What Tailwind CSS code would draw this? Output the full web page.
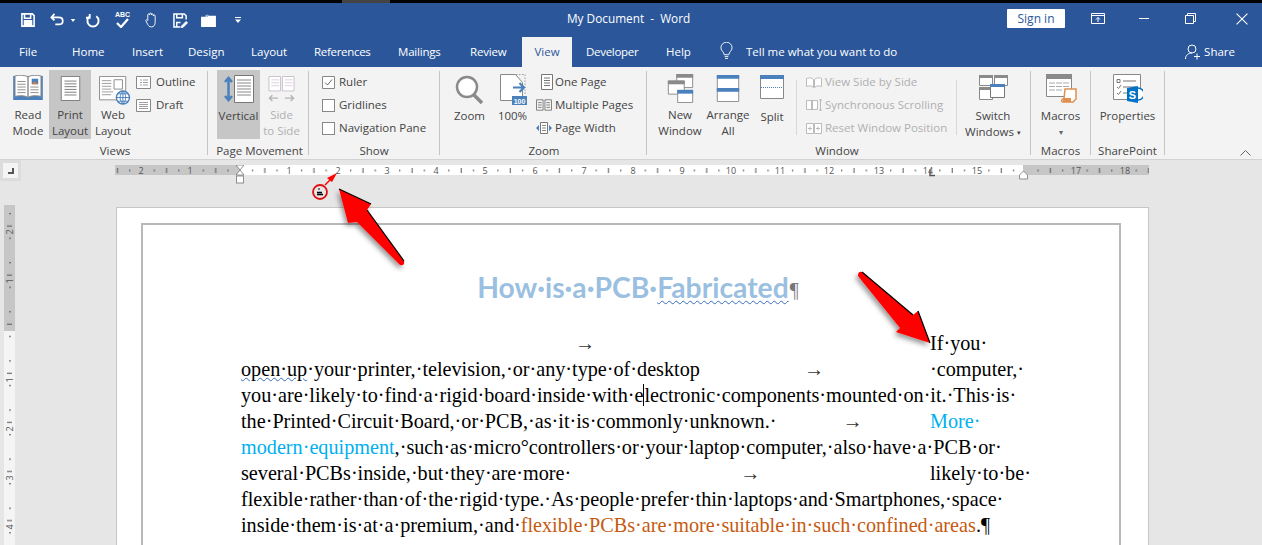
<!doctype html>
<html><head><meta charset="utf-8">
<script src="https://cdn.jsdelivr.net/npm/@tailwindcss/browser@4"></script>
</head>
<body class="w-[1262px] h-[545px] overflow-hidden relative bg-[#e6e6e6] font-['Open_Sans',sans-serif] text-[11.5px] text-[#444]">

<!-- top strip -->
<div class="h-[3px] bg-black flex"><div class="ml-[342px] w-[48px] bg-[#444]"></div></div>

<!-- title bar -->
<div class="h-[34px] bg-[#2b579a] text-white flex items-center relative">
  <div class="flex items-center ml-[21px] h-full">
    <svg class="w-[14px] h-[14px]" viewBox="0 0 16 16" fill="none" stroke="#fff" stroke-width="1.800"><path d="M1 1h12l2 2v12H1z"/><path d="M4 1v5h7V1" /><path d="M4 15v-6h8v6" fill="#fff"/></svg>
    <svg class="w-[15px] h-[14px] ml-[15px]" viewBox="0 0 17 16" fill="none" stroke="#fff" stroke-width="2"><path d="M5 1L1.500 5 5 8.500M2 5h8c6 0 6 8 0 8H6"/></svg>
    <svg class="w-[6px] h-[3px] ml-[5px]" viewBox="0 0 6 4" fill="#fff"><path d="M0 0h6L3 4z"/></svg>
    <svg class="w-[14px] h-[15px] ml-[10px]" viewBox="0 0 15 16" fill="none" stroke="#fff" stroke-width="2"><path d="M11 3.500a6 6 0 1 1-7 0M4 1v4H0"/></svg>
    <div class="relative ml-[15px] w-[15px] h-[16px]">
      <span class="absolute left-0 top-[-2px] text-[7px] font-bold leading-[9px] font-['Liberation_Sans',sans-serif]">ABC</span>
      <svg class="absolute left-[1px] top-[6px] w-[13px] h-[10px]" viewBox="0 0 13 10" fill="none" stroke="#fff" stroke-width="2.200"><path d="M1 5l4 4 7-8"/></svg>
    </div>
    <svg class="w-[12px] h-[16px] ml-[15px]" viewBox="0 0 13 17" fill="none" stroke="#fff" stroke-width="1"><path d="M3 9V3a1 1 0 0 1 2 0V2a1 1 0 0 1 2 0v1a1 1 0 0 1 2 0v1a1 1 0 0 1 2 0v7c0 3-1.500 5-4 5s-3-1-4-2.500L1 9.500c-.5-1 1-2 2-.5z"/></svg>
    <svg class="w-[15px] h-[15px] ml-[16px]" viewBox="0 0 16 16" fill="none" stroke="#fff" stroke-width="1.600"><path d="M8 15H1V1h11l2 2v4"/><path d="M4 1v4h6V1M4 15v-5h4"/><path d="M9 14l5-5 1.500 1.500-5 5H9z" fill="#fff" stroke-width="1"/></svg>
    <svg class="w-[15px] h-[13px] ml-[13px]" viewBox="0 0 16 14" fill="#fff"><path d="M0 3h5V1h1v2h1V0l1 2h8v12H0z"/></svg>
    <svg class="w-[6px] h-[6px] ml-[19px]" viewBox="0 0 6 6" fill="#fff"><path d="M0 0h6v1H0zM0 2.500h6L3 6z"/></svg>
  </div>
  <span class="absolute left-[567px] top-[7px] text-[11.8px] leading-[17px]">My Document&nbsp; -&nbsp; Word</span>
  <div class="ml-auto flex items-center h-full">
    <div class="w-[58px] h-[19px] bg-white rounded-[1px] text-[#2b579a] text-[12px] leading-[19px] text-center mr-[26px] mt-[-4px]">Sign in</div>
    <svg class="w-[14px] h-[11px] mr-[34px] mt-[-4px]" viewBox="0 0 14 11" fill="none" stroke="#fff"><path d="M.5.500h13v10H.5zM.5 2.500h13M7 9V4.500M5 6.500l2-2 2 2"/></svg>
    <div class="w-[10px] h-[1px] bg-white mr-[36px] mt-[-3px]"></div>
    <svg class="w-[11px] h-[11px] mr-[40px] mt-[-3px]" viewBox="0 0 11 11" fill="none" stroke="#fff"><path d="M.5 2.500h8v8h-8zM2.500 2.500v-2h8v8h-2"/></svg>
    <svg class="w-[12px] h-[12px] mr-[14px] mt-[-3px]" viewBox="0 0 11 11" fill="none" stroke="#fff"><path d="M.5.500l10 10M10.500.500l-10 10"/></svg>
  </div>
</div>

<!-- tabs -->
<div class="h-[30px] bg-[#2b579a] text-white flex items-end text-[11.5px] relative">
  <div class="w-[19px]"></div>
  <span class="h-[24px] w-[53px]">File</span>
  <span class="h-[24px] w-[60px]">Home</span>
  <span class="h-[24px] w-[56px]">Insert</span>
  <span class="h-[24px] w-[63px]">Design</span>
  <span class="h-[24px] w-[63px]">Layout</span>
  <span class="h-[24px] w-[84px] tracking-[-0.3px]">References</span>
  <span class="h-[24px] w-[72px] tracking-[-0.2px]">Mailings</span>
  <span class="h-[24px] w-[52px] tracking-[-0.2px]">Review</span>
  <span class="h-[30px] w-[50px] bg-[#f3f3f3] text-[#2b579a] text-center pt-[6px]">View</span>
  <span class="h-[24px] w-[80px] ml-[14px] tracking-[-0.3px]">Developer</span>
  <span class="h-[24px] w-[54px]">Help</span>
  <svg class="w-[13px] h-[19px] mb-[6px] mr-[13px]" viewBox="0 0 14 19" fill="none" stroke="#fff"><path d="M4.500 13c0-3-3.500-4-3.500-7.500a6 6 0 0 1 12 0C13 9 9.500 10 9.500 13zM5 15h4M5.500 17h3"/></svg>
  <span class="h-[24px]">Tell me what you want to do</span>
  <div class="ml-auto h-[24px] flex items-start mr-[27px]">
    <svg class="w-[15px] h-[16px] mr-[4px] mt-[1px]" viewBox="0 0 15 16" fill="none" stroke="#fff"><circle cx="7" cy="5" r="4"/><path d="M.5 15c0-4 3-6 6.500-6M9 12.500h6M12 9.500v6"/></svg>
    <span>Share</span>
  </div>
</div>

<!-- ribbon -->
<div class="h-[92px] bg-[#f3f3f3] border-b-[1px] border-[#d2d2d2] box-content flex leading-[16px] text-[#444] relative">
  <!-- Views -->
  <div class="w-[208px] h-[84px] mt-[4px] border-r border-[#c6c6c6] flex flex-col shrink-0 pl-[7px]">
    <div class="flex h-[69px] shrink-0 mt-[-1px]">
      <div class="w-[42px] flex flex-col items-center pt-[5px]">
        <svg class="w-[32px] h-[27px]" viewBox="0 0 32 27" fill="none"><path d="M0 1h32v26H0z" fill="#4a80bb"/><path d="M2 1c5-1 10-1 14 1v22c-4-2-9-2-14-1zM30 1c-5-1-10-1-14 1v22c4-2 9-2 14-1z" fill="#fff" stroke="#888"/><path d="M4.500 7h9M4.500 10h9M4.500 13h9M4.500 16h9M4.500 19h9M18.500 13h9M18.500 16h9M18.500 19h9" stroke="#888"/><path d="M20 4h7v6h-7z" fill="#4a80bb"/><path d="M20 10l3-3 4 3z" fill="#d87a3a"/></svg>
        <span class="text-center mt-[7px]">Read<br>Mode</span>
      </div>
      <div class="w-[42px] bg-[#c6c6c6] flex flex-col items-center pt-[6px]">
        <svg class="w-[21px] h-[27px]" viewBox="0 0 21 27" fill="#fff" stroke="#777"><path d="M.5.500h20v26H.5z"/><path d="M4 5.500h13M4 8.500h13M4 11.500h13M4 14.500h13M4 17.500h13M4 20.500h13" fill="none"/></svg>
        <span class="text-center mt-[6px]">Print<br>Layout</span>
      </div>
      <div class="w-[44px] flex flex-col items-center pt-[6px]">
        <svg class="w-[33px] h-[31px] ml-[2px]" viewBox="0 0 33 31" fill="none"><path d="M.5.500h28v25H.5z" fill="#fff" stroke="#888"/><path d="M3 5h10M3 8h10M3 11h10M3 14h10M3 17h12M3 20h10" stroke="#999"/><path d="M16 4h9v10h-9z" stroke="#888"/><circle cx="25.500" cy="23" r="7" fill="#fff" stroke="#4a80bb" stroke-width="1.500"/><path d="M18.500 23h14M25.500 16v14M20 19h11M20 27h11M25.500 16c-4 4-4 10 0 14M25.500 16c4 4 4 10 0 14" stroke="#4a80bb"/></svg>
        <span class="text-center mt-[2px]">Web<br>Layout</span>
      </div>
      <div class="flex flex-col ml-[1px] pt-[4px] gap-[7px]">
        <div class="flex items-center h-[16px] gap-[5px]"><svg class="w-[15px] h-[13px]" viewBox="0 0 15 13" fill="#fff" stroke="#888"><path d="M.5.500h14v12H.5z"/><path d="M4 4h2M4 6.500h2M4 9h2M7 4h5M7 6.500h5M7 9h5" fill="none" stroke-width=".8"/></svg><span>Outline</span></div>
        <div class="flex items-center h-[16px] gap-[5px]"><svg class="w-[15px] h-[13px]" viewBox="0 0 15 13" fill="#fff" stroke="#888"><path d="M.5.500h14v12H.5z"/><path d="M3 3.500h9M3 5.500h9M3 7.500h9M3 9.500h9" fill="none" stroke-width=".8"/></svg><span>Draft</span></div>
      </div>
    </div>
    <div class="text-center pl-[16px] mt-[4px]">Views</div>
  </div>
  <!-- Page movement -->
  <div class="w-[101px] h-[84px] mt-[4px] border-r border-[#c6c6c6] flex flex-col shrink-0 pl-[9px]">
    <div class="flex h-[69px] shrink-0 mt-[-1px]">
      <div class="w-[43px] bg-[#c6c6c6] flex flex-col items-center pt-[5px]">
        <svg class="w-[30px] h-[28px]" viewBox="0 0 30 28" fill="none"><path d="M4.500 3v22M1 7l3.500-4L8 7M1 21l3.500 4L8 21" stroke="#4a80bb" stroke-width="2.500"/><path d="M10.500.500h19v27h-19z" fill="#fff" stroke="#777"/><path d="M13 5h14M13 8h14M13 11h14M13 14h14M13 17h14M13 20h14" stroke="#888"/></svg>
        <span class="mt-[5px]">Vertical</span>
      </div>
      <div class="w-[43px] flex flex-col items-center pt-[6px] text-[#b0b0b0]">
        <svg class="w-[27px] h-[27px]" viewBox="0 0 27 27" fill="none"><path d="M.5.500h12v15H.5zM14.500.500h12v15h-12z" fill="#fff" stroke="#c9c0cc"/><path d="M3 4h8M3 7h8M3 10h8M17 4h8M17 7h8M17 10h8" stroke="#dcd0dc"/><path d="M1 23h9M4 20l-3 3 3 3M17 23h9M23 20l3 3-3 3" stroke="#b5b5b5" stroke-width="1.500"/></svg>
        <span class="text-center mt-[5px]">Side<br>to Side</span>
      </div>
    </div>
    <div class="text-center mt-[4px] -ml-[6px]">Page Movement</div>
  </div>
  <!-- Show -->
  <div class="w-[131px] h-[84px] mt-[4px] border-r border-[#c6c6c6] flex flex-col shrink-0 pl-[13px]">
    <div class="flex flex-col h-[69px] shrink-0 mt-[-1px] pt-[4px] gap-[7px]">
      <div class="flex items-center h-[16px] gap-[4px]"><svg class="w-[13px] h-[13px]" viewBox="0 0 13 13" fill="#fff" stroke="#888"><path d="M.5.500h12v12H.5z"/><path d="M3 6.500l2.500 2.500L10 3.500" fill="none" stroke="#666"/></svg><span>Ruler</span></div>
      <div class="flex items-center h-[16px] gap-[4px]"><span class="w-[13px] h-[13px] bg-white border border-[#888]"></span><span>Gridlines</span></div>
      <div class="flex items-center h-[16px] gap-[4px]"><span class="w-[13px] h-[13px] bg-white border border-[#888]"></span><span>Navigation Pane</span></div>
    </div>
    <div class="text-center mt-[4px] -ml-[13px]">Show</div>
  </div>
  <!-- Zoom -->
  <div class="w-[207px] h-[84px] mt-[4px] border-r border-[#c6c6c6] flex flex-col shrink-0">
    <div class="flex h-[69px] shrink-0 mt-[-1px]">
      <div class="w-[59px] flex flex-col items-center pt-[5px]">
        <svg class="w-[29px] h-[30px]" viewBox="0 0 29 30" fill="none"><circle cx="12" cy="12" r="10" stroke="#8a8a8a" stroke-width="2.500" fill="#fff"/><path d="M19 20l8 8" stroke="#8a8a8a" stroke-width="3.500"/></svg>
        <span class="mt-[3px]">Zoom</span>
      </div>
      <div class="w-[27px] flex flex-col items-center pt-[4px]">
        <svg class="w-[27px] h-[31px] ml-[1px] font-['Liberation_Sans',sans-serif]" viewBox="0 0 27 31" fill="none"><path d="M.5.500h15l7 8v18H.5z" fill="#fff" stroke="#888"/><path d="M16 .500h9v20" stroke="#999" stroke-dasharray="1.500 1.500"/><path d="M13 13.500h11M19.500 9l4.500 4.500-4.500 4.500" stroke="#4a80bb" stroke-width="2.200"/><rect x="12" y="22" width="15" height="9" fill="#4a80bb"/><text x="19.500" y="29.500" font-size="7" font-weight="700" fill="#fff" text-anchor="middle">100</text></svg>
        <span class="mt-[3px] -mx-[4px]">100%</span>
      </div>
      <div class="flex flex-col pt-[4px] gap-[7px] ml-[10px]">
        <div class="flex items-center h-[16px]"><span class="w-[19px] flex justify-center"><svg class="w-[12px] h-[16px] ml-[2px]" viewBox="0 0 12 16" fill="#fff" stroke="#777"><path d="M.5.500h11v15H.5z"/><path d="M3 4h6M3 6.500h6M3 9h6M3 11.500h6" fill="none"/></svg></span><span class="ml-[0px]">One Page</span></div>
        <div class="flex items-center h-[16px]"><svg class="w-[16px] h-[12px]" viewBox="0 0 17 12" fill="#f8f8f8" stroke="#777"><path d="M.5.500h7v11h-7zM9.500.500h7v11h-7z"/><path d="M2 3.500h4M2 6h4M2 8.500h4M11 3.500h4M11 6h4M11 8.500h4" fill="none"/></svg><span class="ml-[3px]">Multiple Pages</span></div>
        <div class="flex items-center h-[16px]"><svg class="w-[16px] h-[12px]" viewBox="0 0 16 12" fill="none"><path d="M4.500.500h7v11h-7z" fill="#fff" stroke="#777"/><path d="M6 3.500h4M6 6h4M6 8.500h4" stroke="#888"/><path d="M0 6l3-3v6zM16 6l-3-3v6z" fill="#4a80bb"/></svg><span class="ml-[3px]">Page Width</span></div>
      </div>
    </div>
    <div class="text-center mt-[4px] pl-[2px]">Zoom</div>
  </div>
  <!-- Window -->
  <div class="w-[384px] h-[84px] mt-[4px] border-r border-[#c6c6c6] flex flex-col shrink-0 relative">
    <div class="flex h-[69px] shrink-0 mt-[-1px]">
      <div class="w-[52px] ml-[7px] flex flex-col items-center pt-[4px]">
        <svg class="w-[27px] h-[31px]" viewBox="0 0 27 31" fill="#fff"><path d="M9.500.500h17v14h-17z" stroke="#888"/><path d="M9 0h18v4H9z" fill="#8a8a8a"/><path d="M.5 7.500h17v14H.5z" stroke="#888"/><path d="M0 7h18v4H0z" fill="#8a8a8a"/><path d="M10.500 17.500h16v13h-16z" stroke="#888"/><path d="M10 17h17v4H10z" fill="#4a80bb"/></svg>
        <span class="text-center mt-[4px]">New<br>Window</span>
      </div>
      <div class="w-[44px] flex flex-col items-center pt-[5px]">
        <svg class="w-[24px] h-[29px]" viewBox="0 0 24 29" fill="#fff"><path d="M.5.500h23v28H.5z" stroke="#888"/><path d="M0 0h24v4H0zM0 14h24v4H0z" fill="#4a80bb"/></svg>
        <span class="text-center mt-[5px]">Arrange<br>All</span>
      </div>
      <div class="w-[44px] flex flex-col items-center pt-[5px]">
        <svg class="w-[24px] h-[24px]" viewBox="0 0 24 24" fill="#fff"><path d="M.5.500h23v23H.5z" stroke="#888"/><path d="M0 0h24v4H0z" fill="#4a80bb"/><path d="M1 12.500h22" stroke="#4a80bb" stroke-dasharray="1 1"/></svg>
        <span class="mt-[10px]">Split</span>
      </div>
      <div class="w-[1px] h-[55px] bg-[#d8d8d8] mt-[10px] ml-[2px]"></div>
      <div class="flex flex-col pt-[4px] gap-[7px] ml-[9px] text-[#b0b0b0]">
        <div class="flex items-center h-[16px]"><svg class="w-[16px] h-[11px]" viewBox="0 0 16 11" fill="#fff" stroke="#bbb"><path d="M.5 1.500c3-1 5-1 7 1v8c-2-2-4-2-7-1zM15.500 1.500c-3-1-5-1-7 1v8c2-2 4-2 7-1z"/></svg><span class="ml-[3px]">View Side by Side</span></div>
        <div class="flex items-center h-[16px]"><svg class="w-[16px] h-[14px]" viewBox="0 0 16 14" fill="#fff" stroke="#bbb"><path d="M.5 2.500h6v9h-6zM5.500 2.500h6v9h-6z"/><path d="M14.500 1v12M13 2h3M13 12h3" fill="none"/></svg><span class="ml-[3px]">Synchronous Scrolling</span></div>
        <div class="flex items-center h-[16px]"><svg class="w-[16px] h-[11px]" viewBox="0 0 16 11" fill="#fff" stroke="#bbb"><path d="M.5.500h7v10h-7zM8.500.500h7v10h-7z"/><path d="M2 5.500h4M4 3.500v4M10 5.500h4M12 3.500v4" fill="none"/></svg><span class="ml-[3px]">Reset Window Position</span></div>
      </div>
      <div class="w-[1px] h-[55px] bg-[#d8d8d8] mt-[10px] ml-auto mr-[73px]"></div>
    </div>
    <div class="text-center mt-[4px] w-[380px]">Window</div>
    <div class="absolute left-[310px] top-[0px] w-[72px] flex flex-col items-center pt-[4px]">
      <svg class="w-[29px] h-[25px]" viewBox="0 0 29 25" fill="#fff"><path d="M.5.500h13v10H.5zM15.500.500h13v10h-13zM.5 12.500h13v12H.5z" stroke="#888"/><path d="M0 0h14v3H0zM15 0h14v3H15zM0 12h14v3H0z" fill="#8a8a8a"/><path d="M11.500 9.500h14v13h-14z" stroke="#777"/><path d="M11 9h15v3H11z" fill="#4a80bb"/></svg>
      <span class="text-center mt-[8px] leading-[16px]">Switch<br>Windows <span class="text-[7px] align-[1px]">▾</span></span>
    </div>
  </div>
  <!-- Macros -->
  <div class="w-[60px] h-[84px] mt-[4px] border-r border-[#c6c6c6] flex flex-col items-center shrink-0">
    <div class="h-[69px] shrink-0 flex flex-col items-center pt-[4px] mt-[-1px] ml-[2px]">
      <svg class="w-[31px] h-[29px]" viewBox="0 0 31 29" fill="#fff"><path d="M.5.500h25v22H.5z" stroke="#888"/><path d="M0 0h26v5H0z" fill="#8a8a8a"/><path d="M3 9h6M10 9h6M17 9h6M3 12.500h6M10 12.500h6M17 12.500h6M3 16h6M10 16h6" stroke="#aaa"/><path d="M19 15h11v10l-3 3H17c-2 0-2-3 1-3z" fill="#fff" stroke="#e09050" stroke-width="1.500"/><path d="M17 24h8v4h-8z" fill="#e09050"/></svg>
      <span class="mt-[5px] -ml-[2px]">Macros</span>
      <span class="text-[8px] leading-[10px] mt-[3px] text-[#666] -ml-[2px]">▾</span>
    </div>
    <div class="mt-[4px]">Macros</div>
  </div>
  <!-- SharePoint -->
  <div class="w-[74px] h-[84px] mt-[4px] border-r border-[#c6c6c6] flex flex-col items-center shrink-0">
    <div class="h-[69px] shrink-0 flex flex-col items-center pt-[4px] mt-[-1px]">
      <svg class="w-[30px] h-[30px] ml-[2px] font-['Liberation_Sans',sans-serif]" viewBox="0 0 30 30" fill="none"><path d="M.5.500h27v25H.5z" fill="#fff" stroke="#888"/><path d="M4 5.500h3v3H4zM10 7h13M4 13l1.500 1.500L8 11M10 13h13M4 19l1.500 1.500L8 17M10 19h6" stroke="#777"/><path d="M25 14a6 6 0 0 1 0 12" fill="#fff" stroke="#0072c6" stroke-width="1.500"/><path d="M14 14l11-2v17l-11-2z" fill="#0072c6"/><text x="19.500" y="25" font-size="11" font-weight="700" fill="#fff" text-anchor="middle">S</text></svg>
      <span class="mt-[4px]">Properties</span>
    </div>
    <div class="mt-[4px]">SharePoint</div>
  </div>
  <svg class="absolute left-[1240px] top-[83px] w-[11px] h-[6px]" viewBox="0 0 11 6" fill="none" stroke="#666"><path d="M.5 5.500l5-5 5 5"/></svg>
</div>

<!-- workspace -->
<div class="flex h-[385px] relative overflow-hidden">
  <!-- left ruler column -->
  <div class="w-[116px] shrink-0 relative">
    <div class="absolute left-0 top-0 w-[21px] h-[21px] bg-[#dcdcdc]">
      <div class="mt-[3px] ml-[3px] w-[15px] h-[15px] bg-[#f4f4f4] flex items-center justify-center"><div class="w-[6px] h-[6px] border-r-2 border-b-2 border-[#555]"></div></div>
    </div>
    <svg class="absolute left-[4px] top-[45px] w-[11px] h-[340px] font-['Open_Sans',sans-serif]" viewBox="0 0 11 340">
      <defs>
        <pattern id="vt" patternUnits="userSpaceOnUse" width="11" height="49.100" y="-3.800">
          <rect x="5" y="12" width="2" height="1" fill="#555"/><rect x="5" y="36.600" width="2" height="1" fill="#555"/><rect x="3" y="24.300" width="5" height="1" fill="#555"/>
        </pattern>
      </defs>
      <rect width="11" height="126" fill="#c6c6c6"/>
      <rect y="126" width="11" height="214" fill="#f4f4f4"/>
      <rect width="11" height="340" fill="url(#vt)"/>
      <g font-size="9" fill="#555" text-anchor="middle">
        <text transform="translate(9,27) rotate(-90)">2</text>
        <text transform="translate(9,76) rotate(-90)">1</text>
        <text transform="translate(9,175) rotate(-90)">1</text>
        <text transform="translate(9,224) rotate(-90)">2</text>
        <text transform="translate(9,273) rotate(-90)">3</text>
        <text transform="translate(9,322) rotate(-90)">4</text>
      </g>
    </svg>
  </div>
  <!-- main -->
  <div class="flex-1 relative">
    <!-- horizontal ruler -->
    <svg class="absolute left-[-1px] top-[5px] w-[1034px] h-[20px] font-['Open_Sans',sans-serif]" viewBox="0 0 1034 20">
      <defs>
        <pattern id="ht" patternUnits="userSpaceOnUse" width="49.100" height="10" x="125">
          <rect x="12" y="4.500" width="1" height="2" fill="#555"/><rect x="36.600" y="4.500" width="1" height="2" fill="#555"/><rect x="24.300" y="3" width="1" height="5" fill="#555"/>
        </pattern>
      </defs>
      <rect width="1034" height="10" fill="#c6c6c6"/>
      <rect x="125" width="783" height="10" fill="#fff"/>
      <rect width="1034" height="10" fill="url(#ht)"/>
      <g font-size="9" fill="#555" text-anchor="middle">
        <text x="26" y="8.500">2</text><text x="75" y="8.500">1</text>
        <text x="174" y="8.500">1</text><text x="223" y="8.500">2</text><text x="272" y="8.500">3</text><text x="321" y="8.500">4</text><text x="370" y="8.500">5</text><text x="420" y="8.500">6</text><text x="469" y="8.500">7</text><text x="518" y="8.500">8</text><text x="567" y="8.500">9</text><text x="616" y="8.500">10</text><text x="665" y="8.500">11</text><text x="714" y="8.500">12</text><text x="764" y="8.500">13</text><text x="813" y="8.500">14</text><text x="862" y="8.500">15</text><text x="961" y="8.500">17</text><text x="1010" y="8.500">18</text>
      </g>
      <path d="M121 0h8l-4 5 4 5h-8l4-5z" fill="#fff" stroke="#777" stroke-width=".8"/>
      <rect x="121.500" y="11" width="7" height="7" fill="#fff" stroke="#777" stroke-width=".8"/>
      <path d="M815 4.500v6h5" fill="none" stroke="#555" stroke-width="1.500"/>
      <path d="M904.500 14v-4l4-4 4 4v4z" fill="#fff" stroke="#777" stroke-width=".8"/>
    </svg>
    <!-- page -->
    <div class="absolute left-0 top-[47px] w-[1033px] h-[338px] overflow-hidden bg-white border-x border-t border-[#c6c6c6] pl-[24px] pt-[15px]">
      <div class="w-[980px] h-[330px] border-t-2 border-x-2 border-[#b8b8b8] font-['Liberation_Serif',serif] text-[20.2px] leading-[26px] text-black">
        <div class="h-[44px]"></div>
        <div class="flex justify-center h-[36px] items-center pl-[14px]">
          <span class="font-['Lato',sans-serif] font-bold text-[28.300px] leading-[36px] text-[#9bbfe0]">How·is·a·PCB·<span class="underline decoration-wavy decoration-[#3a6ec0] decoration-1 underline-offset-[2px]">Fabricated</span></span><span class="text-[20px] text-[#777] ml-[1px] mt-[6px]">¶</span>
        </div>
        <div class="pl-[98px] pt-[25px]">
          <div class="grid grid-cols-[689px_1fr] h-[26px]"><div class="pl-[334px] text-[#333]">→</div><div>If·you·</div></div>
          <div class="grid grid-cols-[689px_1fr] h-[26px]"><div class="flex"><span><span class="underline decoration-wavy decoration-[#3a6ec0] decoration-1">open·up</span>·your·printer,·television,·or·any·type·of·desktop</span><span class="ml-[104px] text-[#333]">→</span></div><div>·computer,·</div></div>
          <div class="h-[26px] w-[790px] flex justify-between"><span>you·are·likely·to·find·a·rigid·board·inside·with·e<span class="border-l border-black"></span>lectronic·components·mounted·on·it.·This·is·</span></div>
          <div class="grid grid-cols-[689px_1fr] h-[26px]"><div class="flex"><span>the·Printed·Circuit·Board,·or·PCB,·as·it·is·commonly·unknown.·</span><span class="ml-[66px] text-[#333]">→</span></div><div class="text-[#00b0f0]">More·</div></div>
          <div class="h-[26px]"><span class="text-[#00b0f0]">modern·equipment</span>,·such·as·micro°controllers·or·your·laptop·computer,·also·have·a·PCB·or·</div>
          <div class="grid grid-cols-[689px_1fr] h-[26px]"><div class="flex"><span>several·PCBs·inside,·but·they·are·more·</span><span class="ml-[169px] text-[#333]">→</span></div><div>likely·to·be·</div></div>
          <div class="h-[26px]">flexible·rather·than·of·the·rigid·type.·As·people·prefer·thin·laptops·and·Smartphones,·space·</div>
          <div class="h-[26px]">inside·them·is·at·a·premium,·and·<span class="text-[#c55a11]">flexible·PCBs·are·more·suitable·in·such·confined·areas</span>.¶</div>
        </div>
      </div>
    </div>
  </div>
</div>

<!-- annotations overlay -->
<svg class="absolute left-0 top-0 w-[1262px] h-[545px] pointer-events-none" viewBox="0 0 1262 545" fill="none">
  <defs><filter id="sh" x="-30%" y="-30%" width="160%" height="160%"><feDropShadow dx="-2" dy="3" stdDeviation="2.500" flood-color="#000" flood-opacity=".4"/></filter></defs>
  <path d="M339 189L371 204L367 210L404 261Q405 266 400 265L357 222L348 223z" fill="#f00" filter="url(#sh)"/>
  <path d="M339 189L371 204M367 210L404 261" stroke="#000" stroke-width="1.200"/>
  <path d="M930 343L918 311L913 315L862 272Q858 271 858 276L900 328L896 332z" fill="#f00" filter="url(#sh)"/>
  <path d="M918 311L930 343M862 272L913 315" stroke="#000" stroke-width="1.200"/>
  <circle cx="320" cy="192" r="7" stroke="#e01010" stroke-width="1.800" fill="#e6e6e6"/>
  <path d="M317 192.500h5M317 194.500h6" stroke="#000" stroke-width="1.400"/><circle cx="319" cy="189" r="1" fill="#555"/>
  <path d="M325 185L334 176" stroke="#f00" stroke-width="1.500"/><path d="M337 173L327 178L332 182z" fill="#f00"/>
</svg>
</body></html>
